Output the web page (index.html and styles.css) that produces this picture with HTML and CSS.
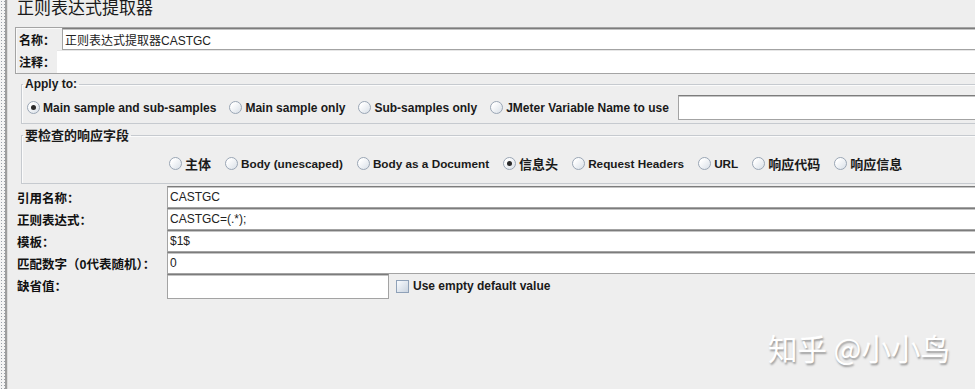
FILE: index.html
```html
<!DOCTYPE html>
<html lang="zh-CN">
<head>
    <meta charset="UTF-8">
    <title>正则表达式提取器</title>
    <link rel="stylesheet" href="styles.css">
</head>
<body>

<div class="frame">
    <div class="strip"></div>
    <div class="panel">
        <h1 class="title">正则表达式提取器</h1>

        <div class="name-box">
            <div class="name-row">
                <span class="label name-label">名称：</span>
                <div class="field name-field">正则表达式提取器CASTGC</div>
            </div>
            <div class="comment-row">
                <span class="label comment-label">注释：</span>
                <div class="comment-field"></div>
            </div>
        </div>

        <fieldset class="group apply-group">
            <legend>Apply to:</legend>
            <div class="radios">
                <span class="radio checked"><i></i>Main sample and sub-samples</span>
                <span class="radio"><i></i>Main sample only</span>
                <span class="radio"><i></i>Sub-samples only</span>
                <span class="radio last"><i></i>JMeter Variable Name to use</span>
                <div class="field var-field"></div>
            </div>
        </fieldset>

        <fieldset class="group check-group">
            <legend>要检查的响应字段</legend>
            <div class="radios check-radios">
                <span class="radio cjk"><i></i>主体</span>
                <span class="radio"><i></i>Body (unescaped)</span>
                <span class="radio"><i></i>Body as a Document</span>
                <span class="radio cjk checked"><i></i>信息头</span>
                <span class="radio"><i></i>Request Headers</span>
                <span class="radio"><i></i>URL</span>
                <span class="radio cjk"><i></i>响应代码</span>
                <span class="radio cjk"><i></i>响应信息</span>
            </div>
        </fieldset>

        <div class="form">
            <span class="label">引用名称：</span>
            <div class="field">CASTGC</div>
            <span class="label">正则表达式：</span>
            <div class="field">CASTGC=(.*);</div>
            <span class="label">模板：</span>
            <div class="field">$1$</div>
            <span class="label">匹配数字（0代表随机）：</span>
            <div class="field">0</div>
            <span class="label">缺省值：</span>
            <div class="default-row">
                <div class="field default-field"></div>
                <span class="checkbox"><i></i>Use empty default value</span>
            </div>
        </div>
    </div>
</div>

<div class="watermark">知乎 @小小鸟</div>

</body>
</html>
```

FILE: styles.css
```css
body {
    margin: 0;
    width: 975px;
    height: 389px;
    overflow: hidden;
    background-color: #eeeeee;
    font-family: "Liberation Sans", "Noto Sans CJK SC", Arial, sans-serif;
    font-size: 12px;
    color: #111;
    position: relative;
}

.frame {
    display: flex;
    height: 389px;
    overflow: hidden;
}

.strip {
    flex: 0 0 5px;
    background-color: #f4f4f4;
    background-image: radial-gradient(circle, #9aa0a8 0.8px, transparent 0.9px);
    background-size: 3px 3px;
    border-right: 2px solid #9d9d9d;
    box-shadow: 1px 0 0 #dcdcdc;
}

.panel {
    width: 1060px;
    padding-left: 8px;
    flex: none;
}

.title {
    margin: 0 0 9px 2px;
    font-size: 17px;
    line-height: 18px;
    font-weight: normal;
    color: #1a1a1a;
}

.label {
    font-weight: bold;
    white-space: nowrap;
}

.field {
    box-sizing: border-box;
    background-color: #fff;
    border: 1px solid #a3a3a3;
    border-top-color: #7c7c7c;
    box-shadow: inset 0 1px 0 #c4c4c4;
    padding: 0 2px;
    display: flex;
    align-items: center;
    white-space: nowrap;
    color: #222;
}

/* name / comment */

.name-box {
    border: 1px solid #a4a4a4;
    box-shadow: inset 1px 1px 0 #fafafa;
}

.name-row,
.comment-row {
    display: flex;
    align-items: center;
}

.name-row {
    height: 22px;
}

.comment-row {
    height: 23px;
}

.name-label {
    width: 43px;
    padding-left: 3px;
}

.comment-label {
    width: 38px;
    padding-left: 3px;
}

.name-field {
    flex: 1;
    height: 22px;
}

.comment-field {
    flex: 1;
    height: 23px;
    background-color: #fff;
    border-top: 1px solid #e6e6e6;
    box-sizing: border-box;
}

/* grouped radios */

.group {
    margin: 3px 0 0 6px;
    padding: 0;
    border: 1px solid #c6cacf;
    box-shadow: inset 1px 1px 0 #fbfbfb;
    min-inline-size: 0;
}

.group legend {
    padding: 0 2px;
    margin-left: 1px;
    font-weight: bold;
    line-height: 14px;
    color: #1a1a1a;
}

.check-group {
    margin-top: 4px;
}

.check-group legend {
    font-size: 13px;
    line-height: 15px;
}

.radios {
    display: flex;
    align-items: center;
}

.apply-group .radios {
    padding: 4px 0 3px 5px;
}

.apply-group .radio {
    margin-right: 13px;
}

.check-radios {
    padding: 12px 0 12px 147px;
    height: 16px;
}

.radio {
    display: flex;
    align-items: center;
    font-weight: bold;
    white-space: nowrap;
    margin-right: 14px;
    color: #1a1a1a;
}

.apply-group .radio.last {
    margin-right: 9px;
}

.radio i {
    box-sizing: border-box;
    width: 13px;
    height: 13px;
    border-radius: 50%;
    border: 1px solid #9aa6b5;
    background: linear-gradient(135deg, #ffffff 20%, #dde3ea 90%);
    margin-right: 3px;
    position: relative;
}

.radio.checked i::after {
    content: "";
    position: absolute;
    left: 3px;
    top: 3px;
    width: 5px;
    height: 5px;
    border-radius: 50%;
    background: #2a2a2a;
}

.check-radios .radio {
    font-size: 11.75px;
}

.check-radios .radio.cjk {
    font-size: 13px;
}

.var-field {
    flex: none;
    width: 400px;
    height: 25px;
}

/* form rows */

.form {
    display: grid;
    grid-template-columns: 150px 1fr;
    grid-auto-rows: 22px;
    margin: 2px 0 0 2px;
    align-items: center;
}

.form .label {
    font-size: 12.5px;
}

.form .field {
    height: 22px;
}

.default-row {
    display: flex;
    align-items: center;
    height: 25px;
    margin-top: 2px;
}

.form .default-field {
    width: 222px;
    height: 25px;
}

.checkbox {
    display: flex;
    align-items: center;
    margin-left: 7px;
    font-weight: bold;
    color: #1a1a1a;
}

.checkbox i {
    box-sizing: border-box;
    width: 13px;
    height: 13px;
    border: 1px solid #8fa1b8;
    background: linear-gradient(135deg, #f4f7fb 10%, #cfd8e3 90%);
    margin-right: 4px;
}

/* overlay */

.watermark {
    position: absolute;
    left: 768px;
    top: 327px;
    font-family: "Noto Sans CJK SC", sans-serif;
    font-size: 29.5px;
    line-height: 40px;
    color: #ffffff;
    text-shadow: 1px 2px 2px rgba(0, 0, 0, 0.35);
    white-space: nowrap;
}
```
